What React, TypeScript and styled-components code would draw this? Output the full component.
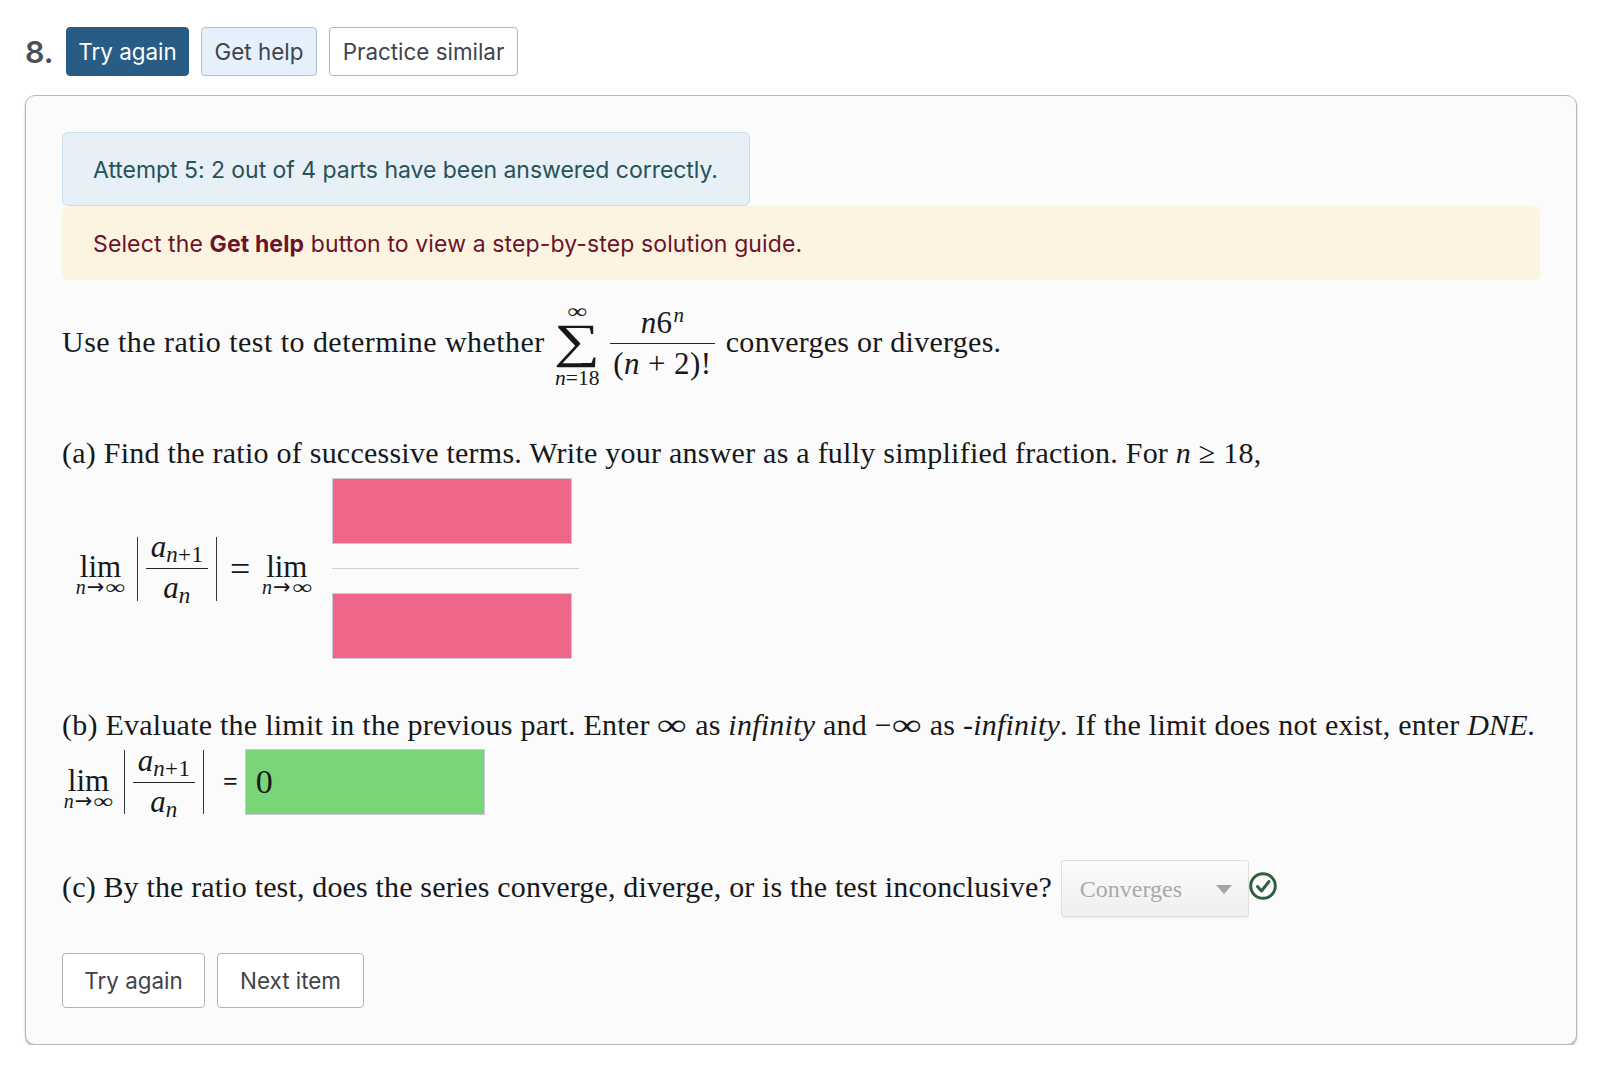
import React from "react";
import styled, { createGlobalStyle } from "styled-components";

const Global = createGlobalStyle`
  html, body { margin: 0; padding: 0; background: #fff; }
  * { box-sizing: border-box; }
`;
const Page = styled.div`
  width: 1624px;
  padding: 27px 47px 0 25px;
  font-family: Inter, "Liberation Sans", sans-serif;
`;
const Header = styled.div`
  display: flex;
  align-items: center;
  height: 49px;
`;
const Num = styled.span`
  font-size: 30.5px;
  font-weight: 600;
  color: #4a4f57;
  width: 41px;
`;
const Btn = styled.button<{ $kind?: "primary" | "help" | "plain"; $w: number; $h?: number }>`
  width: ${(p) => p.$w}px;
  height: ${(p) => p.$h ?? 49}px;
  margin-right: 12px;
  padding: 0;
  font-family: inherit;
  font-size: 22.4px;
  border-radius: 4px;
  border: 1px solid ${(p) => (p.$kind === "primary" ? "#285c85" : p.$kind === "help" ? "#b4c0d0" : "#b1b4bd")};
  background: ${(p) => (p.$kind === "primary" ? "#285c85" : p.$kind === "help" ? "#e6f0fc" : "#fff")};
  color: ${(p) => (p.$kind === "primary" ? "#fff" : "#3f444c")};
`;
const Panel = styled.div`
  margin-top: 19px;
  height: 950px;
  padding: 36px;
  background: #fbfbfc;
  border: 1px solid #b5b8c4;
  border-radius: 10px;
  box-shadow: 0 2px 2px rgba(90, 95, 110, 0.45);
`;
const Notice = styled.div`
  display: flex;
  align-items: center;
  height: 74px;
  font-size: 23px;
  border-radius: 6px;
`;
const Info = styled(Notice)`
  width: 688px;
  padding: 1px 0 0 30px;
  background: #e7eff7;
  border: 1px solid #c6dfeb;
  color: #265259;
  letter-spacing: -0.04px;
`;
const Warn = styled(Notice)`
  padding: 1px 0 0 31px;
  background: #fdf3e1;
  color: #6a1329;
  letter-spacing: 0.12px;
  b { font-weight: 700; }
`;
const Serif = styled.div`
  font-family: "Liberation Serif", serif;
  font-size: 30px;
  color: #16181a;
`;
const Spaced = styled.span<{ $ls: number; $lift: number }>`
  letter-spacing: ${(p) => p.$ls}px;
  margin-bottom: ${(p) => p.$lift}px;
`;
const SentenceRow = styled(Serif)`
  display: flex;
  align-items: center;
  height: 90px;
  margin-top: 20px;
  padding-bottom: 4px;
  white-space: nowrap;
`;
const I = styled.i`
  font-family: "Liberation Serif", serif;
  font-style: italic;
`;
const Inf = styled.span`
  display: inline-block;
  width: 1em;
  text-align: center;
  transform: scaleX(1.4);
`;
const Arrow = styled.span`
  font-family: "DejaVu Sans", sans-serif;
  font-size: 21px;
  font-weight: 400;
  margin: 0 1px;
`;
const SumBlock = styled.span`
  display: inline-flex;
  flex-direction: column;
  align-items: center;
  width: 49px;
  margin: 0 8px;
  line-height: 1;
`;
const SumSup = styled.span`
  font-size: 20px;
  height: 17px;
  line-height: 21px;
`;
const SumSign = styled.span`
  font-size: 48px;
  height: 46px;
  line-height: 46px;
  transform: scaleX(1.35);
`;
const SumSub = styled.span`
  font-size: 21.5px;
  height: 21px;
  line-height: 29px;
`;
const Frac = styled.span<{ $w: number }>`
  display: inline-flex;
  flex-direction: column;
  align-items: center;
  width: ${(p) => p.$w}px;
  font-size: 31px;
  line-height: 1;
`;
const FracTop = styled.span<{ $h: number; $lift?: number }>`
  height: ${(p) => p.$h}px;
  line-height: ${(p) => p.$h - (p.$lift ?? 0)}px;
  white-space: nowrap;
`;
const FracRule = styled.span`
  display: block;
  flex: none;
  width: 100%;
  height: 1px;
  background: #23262a;
`;
const FracBottom = styled.span<{ $h: number; $drop?: number }>`
  height: ${(p) => p.$h}px;
  line-height: ${(p) => p.$h - (p.$drop ?? 0)}px;
  padding-top: ${(p) => p.$drop ?? 0}px;
  white-space: nowrap;
`;
const Wide = styled.span`
  letter-spacing: 0.4px;
`;
const Sup = styled.sup`
  font-size: 21px;
  line-height: 0;
  vertical-align: 11px;
  margin-left: 1px;
`;
const Sub = styled.sub`
  font-size: 23px;
  line-height: 0;
  vertical-align: -5px;
  letter-spacing: 0.4px;
`;
const AfterFrac = styled.span`
  margin-left: 11px;
  margin-bottom: 3px;
  letter-spacing: 0.27px;
`;
const Part = styled(Serif)<{ $top: number; $ls: number }>`
  height: 36px;
  line-height: 36px;
  margin-top: ${(p) => p.$top}px;
  white-space: nowrap;
  letter-spacing: ${(p) => p.$ls}px;
`;
const MathRow = styled.div<{ $top: number; $h: number; $pad?: number }>`
  display: flex;
  align-items: center;
  height: ${(p) => p.$h}px;
  margin-top: ${(p) => p.$top}px;
  padding-left: ${(p) => p.$pad ?? 0}px;
  font-family: "Liberation Serif", serif;
  font-size: 31px;
  color: #16181a;
`;
const Lim = styled.span`
  display: inline-flex;
  flex-direction: column;
  align-items: center;
  flex: none;
  width: 53px;
  line-height: 1;
  padding-top: 11px;
`;
const LimWord = styled.span`
  height: 29px;
  line-height: 29px;
`;
const LimSub = styled.span`
  font-size: 20px;
  height: 18px;
  line-height: 18px;
  margin-top: -3px;
  white-space: nowrap;
`;
const Abs = styled.span<{ $ml: number }>`
  display: inline-flex;
  flex: none;
  justify-content: center;
  align-items: center;
  width: 80px;
  height: 64px;
  margin-left: ${(p) => p.$ml}px;
  border-left: 1.5px solid #33363b;
  border-right: 1.5px solid #33363b;
`;
const Eq = styled.span<{ $l: number; $r: number; $size: number; $heavy?: boolean }>`
  margin: 0 ${(p) => p.$r}px 0 ${(p) => p.$l}px;
  font-size: ${(p) => p.$size}px;
  font-weight: ${(p) => (p.$heavy ? 700 : 400)};
  line-height: 1;
`;
const Blank = styled.div`
  display: flex;
  flex-direction: column;
  width: 247px;
  margin-left: 19px;
`;
const AnswerBox = styled.div<{ $ok?: boolean }>`
  width: 240px;
  height: 66px;
  display: flex;
  align-items: center;
  padding-left: 10px;
  background: ${(p) => (p.$ok ? "#78d678" : "#ee6788")};
  border: 1px solid #c9ccd0;
  font-family: "Liberation Serif", serif;
  font-size: 34px;
  color: #16181a;
`;
const BlankRule = styled.div`
  height: 1px;
  margin: 24px 0;
  background: #cfd0d3;
`;
const PartC = styled(Serif)`
  display: flex;
  align-items: center;
  height: 57px;
  margin-top: 45px;
  white-space: nowrap;
`;
const Picker = styled.div`
  position: relative;
  display: flex;
  align-items: center;
  flex: none;
  width: 188px;
  height: 57px;
  margin-left: 9px;
  padding: 2px 0 0 18px;
  background: linear-gradient(#fbfbfb, #efefef);
  border: 1px solid #dedede;
  border-radius: 3px;
  box-shadow: 0 3px 2px -1px #f1f1f3;
  font-size: 24px;
  color: #a9a9a9;
`;
const Caret = styled.span`
  position: absolute;
  right: 16px;
  top: 24px;
  border-left: 8px solid transparent;
  border-right: 8px solid transparent;
  border-top: 9px solid #a5a5a5;
`;
const Check = styled.svg`
  display: block;
  width: 30px;
  height: 30px;
  margin-left: -1px;
  margin-bottom: 5px;
`;
const Actions = styled.div`
  display: flex;
  margin-top: 36px;
`;

const Limit = () => (
  <Lim>
    <LimWord>lim</LimWord>
    <LimSub>
      <I>n</I><Arrow>→</Arrow><Inf>∞</Inf>
    </LimSub>
  </Lim>
);
const Ratio = ({ ml }: { ml: number }) => (
  <Abs $ml={ml}>
    <Frac $w={62}>
      <FracTop $h={36} $lift={6}>
        <I>a</I>
        <Sub>
          <I>n</I>+1
        </Sub>
      </FracTop>
      <FracRule />
      <FracBottom $h={36} $drop={2}>
        <I>a</I>
        <Sub>
          <I>n</I>
        </Sub>
      </FracBottom>
    </Frac>
  </Abs>
);

export default function App() {
  return (
    <Page>
      <Global />
      <Header>
        <Num>8.</Num>
        <Btn $kind="primary" $w={123}>Try again</Btn>
        <Btn $kind="help" $w={116}>Get help</Btn>
        <Btn $kind="plain" $w={189}>Practice similar</Btn>
      </Header>
      <Panel>
        <Info>Attempt 5: 2 out of 4 parts have been answered correctly.</Info>
        <Warn>
          <span>
            Select the <b>Get help</b> button to view a step-by-step solution guide.
          </span>
        </Warn>
        <SentenceRow>
          <Spaced $ls={0.46} $lift={3}>Use the ratio test to determine whether</Spaced>
          <SumBlock>
            <SumSup><Inf>∞</Inf></SumSup>
            <SumSign>∑</SumSign>
            <SumSub>
              <I>n</I>=18
            </SumSub>
          </SumBlock>
          <Frac $w={105}>
            <FracTop $h={40}>
              <Wide><I>n</I>6</Wide><Sup><I>n</I></Sup>
            </FracTop>
            <FracRule />
            <FracBottom $h={40}>
              <Wide>(<I>n</I> + 2)!</Wide>
            </FracBottom>
          </Frac>
          <AfterFrac>converges or diverges.</AfterFrac>
        </SentenceRow>
        <Part $top={45} $ls={0.24}>
          (a) Find the ratio of successive terms. Write your answer as a fully simplified fraction. For <I>n</I> ≥ 18,
        </Part>
        <MathRow $top={7} $h={181} $pad={12}>
          <Limit />
          <Ratio ml={10} />
          <Eq $l={13} $r={10} $size={36}>=</Eq>
          <Limit />
          <Blank>
            <AnswerBox />
            <BlankRule />
            <AnswerBox />
          </Blank>
        </MathRow>
        <Part $top={48} $ls={0.24}>
          (b) Evaluate the limit in the previous part. Enter <Inf>∞</Inf> as <I>infinity</I> and −<Inf>∞</Inf> as <I>-infinity</I>. If the limit does not exist, enter <I>DNE.</I>
        </Part>
        <MathRow $top={6} $h={66}>
          <Limit />
          <Ratio ml={9} />
          <Eq $l={19} $r={7} $size={26} $heavy>=</Eq>
          <AnswerBox $ok>0</AnswerBox>
        </MathRow>
        <PartC>
          <Spaced $ls={0.16} $lift={3}>(c) By the ratio test, does the series converge, diverge, or is the test inconclusive?</Spaced>
          <Picker>
            Converges
            <Caret />
          </Picker>
          <Check viewBox="0 0 30 30" fill="none" stroke="#2f5f3c">
            <circle cx="15" cy="15" r="12.3" strokeWidth="3" />
            <path d="M9.5 15.5l4 4.5 7.5-9.5" strokeWidth="3" strokeLinecap="round" strokeLinejoin="round" />
          </Check>
        </PartC>
        <Actions>
          <Btn $kind="plain" $w={143} $h={55}>Try again</Btn>
          <Btn $kind="plain" $w={147} $h={55}>Next item</Btn>
        </Actions>
      </Panel>
    </Page>
  );
}
